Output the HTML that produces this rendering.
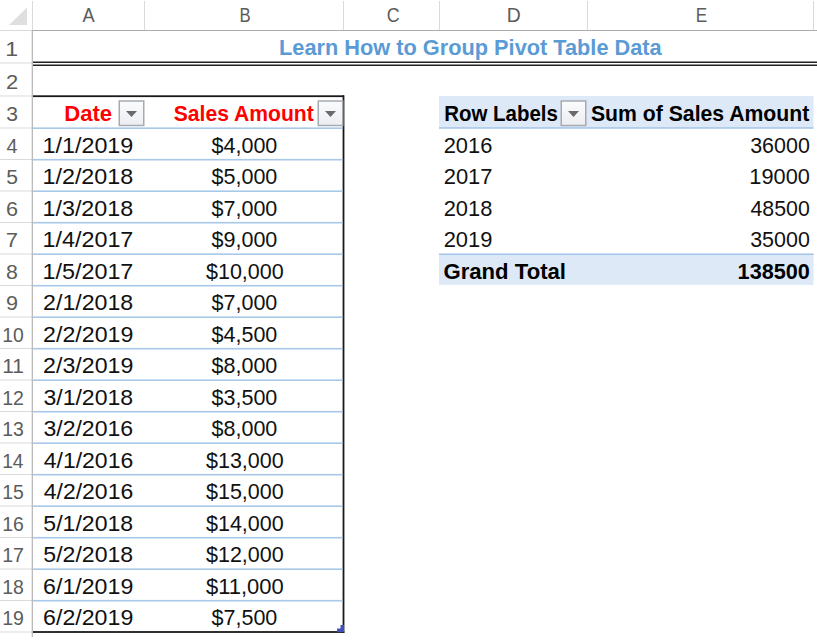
<!DOCTYPE html>
<html><head><meta charset="utf-8"><style>
html,body{margin:0;padding:0;background:#fff;}
body{width:817px;height:644px;overflow:hidden;}
svg{display:block;font-family:"Liberation Sans", sans-serif;}
</style></head><body>
<svg width="817" height="644" viewBox="0 0 817 644">
<defs><linearGradient id="btng" x1="0" y1="0" x2="0" y2="1"><stop offset="0" stop-color="#fafbfc"/><stop offset="1" stop-color="#eceef2"/></linearGradient></defs>
<rect x="0" y="0" width="817" height="644" fill="#fff"/>
<polygon points="9,25 27,7.5 27,25" fill="#dfdfdf"/>
<rect x="32" y="1" width="1" height="29" fill="#dadada"/>
<rect x="144" y="1" width="1" height="29" fill="#dadada"/>
<rect x="343" y="1" width="1" height="29" fill="#dadada"/>
<rect x="439" y="1" width="1" height="29" fill="#dadada"/>
<rect x="587" y="1" width="1" height="29" fill="#dadada"/>
<rect x="813" y="1" width="1" height="29" fill="#dadada"/>
<rect x="0" y="30" width="32" height="1" fill="#dadada"/>
<rect x="32" y="30" width="785" height="1" fill="#ababab"/>
<text x="82.46" y="22.20" font-size="19.33" fill="#5c5c5c" textLength="12.17" lengthAdjust="spacingAndGlyphs">A</text>
<text x="239.53" y="22.20" font-size="19.33" fill="#5c5c5c" textLength="11.15" lengthAdjust="spacingAndGlyphs">B</text>
<text x="386.79" y="22.20" font-size="19.33" fill="#5c5c5c" textLength="12.89" lengthAdjust="spacingAndGlyphs">C</text>
<text x="506.71" y="22.20" font-size="19.33" fill="#5c5c5c" textLength="14.02" lengthAdjust="spacingAndGlyphs">D</text>
<text x="695.69" y="22.20" font-size="19.33" fill="#5c5c5c" textLength="11.44" lengthAdjust="spacingAndGlyphs">E</text>
<rect x="0" y="62.5" width="32" height="1" fill="#dadada"/>
<rect x="0" y="95.5" width="32" height="1" fill="#dadada"/>
<rect x="0" y="127.5" width="32" height="1" fill="#dadada"/>
<rect x="0" y="159.0" width="32" height="1" fill="#dadada"/>
<rect x="0" y="190.5" width="32" height="1" fill="#dadada"/>
<rect x="0" y="222.0" width="32" height="1" fill="#dadada"/>
<rect x="0" y="253.5" width="32" height="1" fill="#dadada"/>
<rect x="0" y="285.0" width="32" height="1" fill="#dadada"/>
<rect x="0" y="316.5" width="32" height="1" fill="#dadada"/>
<rect x="0" y="348.0" width="32" height="1" fill="#dadada"/>
<rect x="0" y="379.5" width="32" height="1" fill="#dadada"/>
<rect x="0" y="411.0" width="32" height="1" fill="#dadada"/>
<rect x="0" y="442.5" width="32" height="1" fill="#dadada"/>
<rect x="0" y="474.0" width="32" height="1" fill="#dadada"/>
<rect x="0" y="505.5" width="32" height="1" fill="#dadada"/>
<rect x="0" y="537.0" width="32" height="1" fill="#dadada"/>
<rect x="0" y="568.5" width="32" height="1" fill="#dadada"/>
<rect x="0" y="600.0" width="32" height="1" fill="#dadada"/>
<rect x="0" y="631.5" width="32" height="1" fill="#dadada"/>
<rect x="31.7" y="30" width="1.2" height="607" fill="#b4b4b4"/>
<text x="5.23" y="56.40" font-size="19.77" fill="#5c5c5c" textLength="12.90" lengthAdjust="spacingAndGlyphs">1</text>
<text x="5.90" y="89.40" font-size="19.77" fill="#5c5c5c" textLength="12.21" lengthAdjust="spacingAndGlyphs">2</text>
<text x="6.20" y="121.40" font-size="19.77" fill="#5c5c5c" textLength="11.73" lengthAdjust="spacingAndGlyphs">3</text>
<text x="6.54" y="152.90" font-size="19.77" fill="#5c5c5c" textLength="11.04" lengthAdjust="spacingAndGlyphs">4</text>
<text x="6.16" y="184.40" font-size="19.77" fill="#5c5c5c" textLength="11.73" lengthAdjust="spacingAndGlyphs">5</text>
<text x="5.90" y="215.90" font-size="19.77" fill="#5c5c5c" textLength="12.05" lengthAdjust="spacingAndGlyphs">6</text>
<text x="5.87" y="247.40" font-size="19.77" fill="#5c5c5c" textLength="12.23" lengthAdjust="spacingAndGlyphs">7</text>
<text x="6.07" y="278.90" font-size="19.77" fill="#5c5c5c" textLength="11.85" lengthAdjust="spacingAndGlyphs">8</text>
<text x="5.99" y="310.40" font-size="19.77" fill="#5c5c5c" textLength="12.04" lengthAdjust="spacingAndGlyphs">9</text>
<text x="2.18" y="341.90" font-size="19.77" fill="#5c5c5c" textLength="21.53" lengthAdjust="spacingAndGlyphs">10</text>
<text x="2.16" y="373.40" font-size="19.77" fill="#5c5c5c" textLength="21.74" lengthAdjust="spacingAndGlyphs">11</text>
<text x="2.16" y="404.90" font-size="19.77" fill="#5c5c5c" textLength="21.78" lengthAdjust="spacingAndGlyphs">12</text>
<text x="2.17" y="436.40" font-size="19.77" fill="#5c5c5c" textLength="21.64" lengthAdjust="spacingAndGlyphs">13</text>
<text x="2.19" y="467.90" font-size="19.77" fill="#5c5c5c" textLength="21.32" lengthAdjust="spacingAndGlyphs">14</text>
<text x="2.17" y="499.40" font-size="19.77" fill="#5c5c5c" textLength="21.59" lengthAdjust="spacingAndGlyphs">15</text>
<text x="2.17" y="530.90" font-size="19.77" fill="#5c5c5c" textLength="21.64" lengthAdjust="spacingAndGlyphs">16</text>
<text x="2.16" y="562.40" font-size="19.77" fill="#5c5c5c" textLength="21.78" lengthAdjust="spacingAndGlyphs">17</text>
<text x="2.17" y="593.90" font-size="19.77" fill="#5c5c5c" textLength="21.63" lengthAdjust="spacingAndGlyphs">18</text>
<text x="2.16" y="625.40" font-size="19.77" fill="#5c5c5c" textLength="21.71" lengthAdjust="spacingAndGlyphs">19</text>
<text x="279.05" y="55.30" font-size="21.51" font-weight="bold" fill="#5b9bd5" textLength="382.61" lengthAdjust="spacingAndGlyphs">Learn How to Group Pivot Table Data</text>
<rect x="33" y="61.5" width="784" height="1.5" fill="#222"/>
<rect x="33" y="64.5" width="784" height="1.5" fill="#222"/>
<rect x="33" y="95.3" width="311" height="1.8" fill="#1a1a1a"/>
<rect x="342.6" y="95.3" width="1.8" height="537.6" fill="#1a1a1a"/>
<rect x="33" y="631.1" width="311.3" height="1.8" fill="#1a1a1a"/>
<rect x="33" y="127.4" width="309.6" height="1.6" fill="#a8c8ea"/>
<rect x="33" y="158.9" width="309.6" height="1.6" fill="#a8c8ea"/>
<rect x="33" y="190.4" width="309.6" height="1.6" fill="#a8c8ea"/>
<rect x="33" y="221.9" width="309.6" height="1.6" fill="#a8c8ea"/>
<rect x="33" y="253.4" width="309.6" height="1.6" fill="#a8c8ea"/>
<rect x="33" y="284.9" width="309.6" height="1.6" fill="#a8c8ea"/>
<rect x="33" y="316.4" width="309.6" height="1.6" fill="#a8c8ea"/>
<rect x="33" y="347.9" width="309.6" height="1.6" fill="#a8c8ea"/>
<rect x="33" y="379.4" width="309.6" height="1.6" fill="#a8c8ea"/>
<rect x="33" y="410.9" width="309.6" height="1.6" fill="#a8c8ea"/>
<rect x="33" y="442.4" width="309.6" height="1.6" fill="#a8c8ea"/>
<rect x="33" y="473.9" width="309.6" height="1.6" fill="#a8c8ea"/>
<rect x="33" y="505.4" width="309.6" height="1.6" fill="#a8c8ea"/>
<rect x="33" y="536.9" width="309.6" height="1.6" fill="#a8c8ea"/>
<rect x="33" y="568.4" width="309.6" height="1.6" fill="#a8c8ea"/>
<rect x="33" y="599.9" width="309.6" height="1.6" fill="#a8c8ea"/>
<text x="64.22" y="121.30" font-size="21.95" font-weight="bold" fill="#ff0000" textLength="47.94" lengthAdjust="spacingAndGlyphs">Date</text>
<text x="173.80" y="121.30" font-size="21.80" font-weight="bold" fill="#ff0000" textLength="139.96" lengthAdjust="spacingAndGlyphs">Sales Amount</text>
<rect x="119.25" y="101.0" width="24.5" height="24.5" fill="url(#btng)" stroke="#a6abb2" stroke-width="1.5"/>
<polygon points="126,111 137,111 131.5,117" fill="#6a6a6a"/>
<rect x="318.25" y="101.0" width="24.5" height="24.5" fill="url(#btng)" stroke="#a6abb2" stroke-width="1.5"/>
<polygon points="325,111 336,111 330.5,117" fill="#6a6a6a"/>
<polygon points="337,632 344,632 344,625 340.5,625 340.5,628.5 337,628.5" fill="#4150c0"/>
<text x="42.52" y="152.80" font-size="21.37" fill="#111" textLength="90.78" lengthAdjust="spacingAndGlyphs">1/1/2019</text>
<text x="211.57" y="152.80" font-size="21.37" fill="#111" textLength="65.77" lengthAdjust="spacingAndGlyphs">$4,000</text>
<text x="42.53" y="184.30" font-size="21.37" fill="#111" textLength="90.69" lengthAdjust="spacingAndGlyphs">1/2/2018</text>
<text x="211.57" y="184.30" font-size="21.37" fill="#111" textLength="65.77" lengthAdjust="spacingAndGlyphs">$5,000</text>
<text x="42.53" y="215.80" font-size="21.37" fill="#111" textLength="90.69" lengthAdjust="spacingAndGlyphs">1/3/2018</text>
<text x="211.57" y="215.80" font-size="21.37" fill="#111" textLength="65.77" lengthAdjust="spacingAndGlyphs">$7,000</text>
<text x="42.52" y="247.30" font-size="21.37" fill="#111" textLength="90.85" lengthAdjust="spacingAndGlyphs">1/4/2017</text>
<text x="211.57" y="247.30" font-size="21.37" fill="#111" textLength="65.77" lengthAdjust="spacingAndGlyphs">$9,000</text>
<text x="42.52" y="278.80" font-size="21.37" fill="#111" textLength="90.85" lengthAdjust="spacingAndGlyphs">1/5/2017</text>
<text x="205.97" y="278.80" font-size="21.37" fill="#111" textLength="77.77" lengthAdjust="spacingAndGlyphs">$10,000</text>
<text x="43.14" y="310.30" font-size="21.37" fill="#111" textLength="90.07" lengthAdjust="spacingAndGlyphs">2/1/2018</text>
<text x="211.57" y="310.30" font-size="21.37" fill="#111" textLength="65.77" lengthAdjust="spacingAndGlyphs">$7,000</text>
<text x="43.14" y="341.80" font-size="21.37" fill="#111" textLength="90.16" lengthAdjust="spacingAndGlyphs">2/2/2019</text>
<text x="211.57" y="341.80" font-size="21.37" fill="#111" textLength="65.77" lengthAdjust="spacingAndGlyphs">$4,500</text>
<text x="43.14" y="373.30" font-size="21.37" fill="#111" textLength="90.16" lengthAdjust="spacingAndGlyphs">2/3/2019</text>
<text x="211.57" y="373.30" font-size="21.37" fill="#111" textLength="65.77" lengthAdjust="spacingAndGlyphs">$8,000</text>
<text x="43.42" y="404.80" font-size="21.37" fill="#111" textLength="89.78" lengthAdjust="spacingAndGlyphs">3/1/2018</text>
<text x="211.57" y="404.80" font-size="21.37" fill="#111" textLength="65.77" lengthAdjust="spacingAndGlyphs">$3,500</text>
<text x="43.42" y="436.30" font-size="21.37" fill="#111" textLength="89.79" lengthAdjust="spacingAndGlyphs">3/2/2016</text>
<text x="211.57" y="436.30" font-size="21.37" fill="#111" textLength="65.77" lengthAdjust="spacingAndGlyphs">$8,000</text>
<text x="43.77" y="467.80" font-size="21.37" fill="#111" textLength="89.44" lengthAdjust="spacingAndGlyphs">4/1/2016</text>
<text x="205.97" y="467.80" font-size="21.37" fill="#111" textLength="77.77" lengthAdjust="spacingAndGlyphs">$13,000</text>
<text x="43.77" y="499.30" font-size="21.37" fill="#111" textLength="89.44" lengthAdjust="spacingAndGlyphs">4/2/2016</text>
<text x="205.97" y="499.30" font-size="21.37" fill="#111" textLength="77.77" lengthAdjust="spacingAndGlyphs">$15,000</text>
<text x="43.38" y="530.80" font-size="21.37" fill="#111" textLength="89.83" lengthAdjust="spacingAndGlyphs">5/1/2018</text>
<text x="205.97" y="530.80" font-size="21.37" fill="#111" textLength="77.77" lengthAdjust="spacingAndGlyphs">$14,000</text>
<text x="43.38" y="562.30" font-size="21.37" fill="#111" textLength="89.83" lengthAdjust="spacingAndGlyphs">5/2/2018</text>
<text x="205.97" y="562.30" font-size="21.37" fill="#111" textLength="77.77" lengthAdjust="spacingAndGlyphs">$12,000</text>
<text x="43.12" y="593.80" font-size="21.37" fill="#111" textLength="90.17" lengthAdjust="spacingAndGlyphs">6/1/2019</text>
<text x="205.97" y="593.80" font-size="21.37" fill="#111" textLength="77.77" lengthAdjust="spacingAndGlyphs">$11,000</text>
<text x="43.12" y="625.30" font-size="21.37" fill="#111" textLength="90.17" lengthAdjust="spacingAndGlyphs">6/2/2019</text>
<text x="211.57" y="625.30" font-size="21.37" fill="#111" textLength="65.77" lengthAdjust="spacingAndGlyphs">$7,500</text>
<rect x="439" y="96" width="374.5" height="32" fill="#dde9f6"/>
<rect x="439" y="127.25" width="374.5" height="1.5" fill="#a2c3e8"/>
<text x="444.13" y="121.40" font-size="21.80" font-weight="bold" fill="#000" textLength="113.71" lengthAdjust="spacingAndGlyphs">Row Labels</text>
<rect x="561.25" y="101.0" width="24.5" height="24.5" fill="url(#btng)" stroke="#a6abb2" stroke-width="1.5"/>
<polygon points="568,111 579,111 573.5,117" fill="#6a6a6a"/>
<text x="590.99" y="121.30" font-size="21.80" font-weight="bold" fill="#000" textLength="218.27" lengthAdjust="spacingAndGlyphs">Sum of Sales Amount</text>
<text x="443.70" y="152.60" font-size="21.80" fill="#111" textLength="48.66" lengthAdjust="spacingAndGlyphs">2016</text>
<text x="750.18" y="152.60" font-size="21.80" fill="#111" textLength="59.66" lengthAdjust="spacingAndGlyphs">36000</text>
<text x="443.70" y="184.10" font-size="21.80" fill="#111" textLength="48.81" lengthAdjust="spacingAndGlyphs">2017</text>
<text x="749.34" y="184.10" font-size="21.80" fill="#111" textLength="60.51" lengthAdjust="spacingAndGlyphs">19000</text>
<text x="443.70" y="215.60" font-size="21.80" fill="#111" textLength="48.65" lengthAdjust="spacingAndGlyphs">2018</text>
<text x="750.51" y="215.60" font-size="21.80" fill="#111" textLength="59.32" lengthAdjust="spacingAndGlyphs">48500</text>
<text x="443.70" y="247.10" font-size="21.80" fill="#111" textLength="48.74" lengthAdjust="spacingAndGlyphs">2019</text>
<text x="750.18" y="247.10" font-size="21.80" fill="#111" textLength="59.66" lengthAdjust="spacingAndGlyphs">35000</text>
<rect x="439" y="254" width="374.5" height="30.8" fill="#dde9f6"/>
<rect x="439" y="253.5" width="374.5" height="1.5" fill="#a2c3e8"/>
<text x="443.51" y="278.70" font-size="22.09" font-weight="bold" fill="#000" textLength="122.44" lengthAdjust="spacingAndGlyphs">Grand Total</text>
<text x="737.64" y="278.80" font-size="21.51" font-weight="bold" fill="#000" textLength="72.25" lengthAdjust="spacingAndGlyphs">138500</text>
</svg>
</body></html>
